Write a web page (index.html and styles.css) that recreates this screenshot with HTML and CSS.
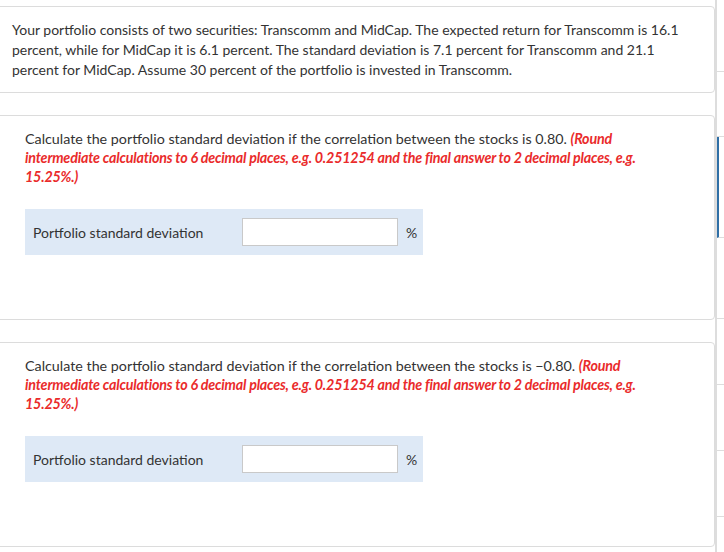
FILE: index.html
```html
<!DOCTYPE html>
<html lang="en">
<head>
<meta charset="utf-8">
<title>Portfolio standard deviation</title>
<link rel="stylesheet" href="styles.css">
</head>
<body>
<div class="page">
  <main class="content">
    <section class="card intro">
      <p>Your portfolio consists of two securities: Transcomm and MidCap. The expected return for Transcomm is 16.1 percent, while for MidCap it is 6.1 percent. The standard deviation is 7.1 percent for Transcomm and 21.1 percent for MidCap. Assume 30 percent of the portfolio is invested in Transcomm.</p>
    </section>
    <section class="card part">
      <p>Calculate the portfolio standard deviation if the correlation between the stocks is 0.80. <em class="hint">(Round intermediate calculations to 6 decimal places, e.g. 0.251254 and the final answer to 2 decimal places, e.g. 15.25%.)</em></p>
      <div class="answer">
        <span class="label">Portfolio standard deviation</span>
        <input class="field" type="text" aria-label="Portfolio standard deviation">
        <span class="unit">%</span>
      </div>
    </section>
    <section class="card part">
      <p>Calculate the portfolio standard deviation if the correlation between the stocks is &minus;0.80. <em class="hint">(Round intermediate calculations to 6 decimal places, e.g. 0.251254 and the final answer to 2 decimal places, e.g. 15.25%.)</em></p>
      <div class="answer">
        <span class="label">Portfolio standard deviation</span>
        <input class="field" type="text" aria-label="Portfolio standard deviation">
        <span class="unit">%</span>
      </div>
    </section>
  </main>
  <aside class="rail">
    <div class="seg h1"></div>
    <div class="seg h2"></div>
    <div class="seg h3 active"></div>
    <div class="seg h4"></div>
    <div class="seg h5"></div>
    <div class="seg h5"></div>
    <div class="seg h5"></div>
  </aside>
</div>
</body>
</html>
```

FILE: styles.css
```css
* { box-sizing: border-box; }
html, body { margin: 0; padding: 0; background: #fff; }
body {
  font-family: Lato, "Open Sans", Arial, sans-serif;
  font-size: 14px;
  color: #333;
  overflow: hidden;
}
.page {
  display: flex;
  width: 724px;
  height: 552px;
}
.content {
  width: 715px;
  padding-top: 6px;
  flex: none;
}
.card {
  margin-left: -10px;
  width: 725px;
  border: 1px solid #dcdcdc;
  border-radius: 4px;
  background: #fff;
}
.card p { margin: 0; }
.intro {
  padding: 13px 12px 12px 21px;
  line-height: 20px;
}
.part {
  margin-top: 22px;
  padding: 13px 25px 64px 34px;
  line-height: 19px;
}
.part p { font-size: 14.3px; }
.hint {
  color: #ea2b2b;
  font-weight: bold;
  font-style: italic;
  letter-spacing: -0.2px;
}
.answer {
  margin-top: 23px;
  width: 398px;
  height: 46px;
  background: #dee9f6;
  display: flex;
  align-items: center;
  padding-left: 8px;
}
.label {
  width: 209px;
  flex: none;
  color: #333;
}
.field {
  width: 156px;
  height: 28px;
  border: 1px solid #c9c9c9;
  background: #fff;
  margin: 0;
  padding: 0 4px;
  font: inherit;
}
.unit {
  margin-left: 8px;
  color: #333;
}
.rail {
  width: 9px;
  flex: none;
  border-left: 2px solid #dddddd;
  display: flex;
  flex-direction: column;
}
.seg {
  flex: none;
  border-bottom: 1px solid #dddddd;
}
.h1 { height: 72px; }
.h2 { height: 65px; }
.h3 { height: 101px; }
.h4 { height: 81px; }
.h5 { height: 66px; }
.active { border-left: 2px solid #2f6fa6; }
```
